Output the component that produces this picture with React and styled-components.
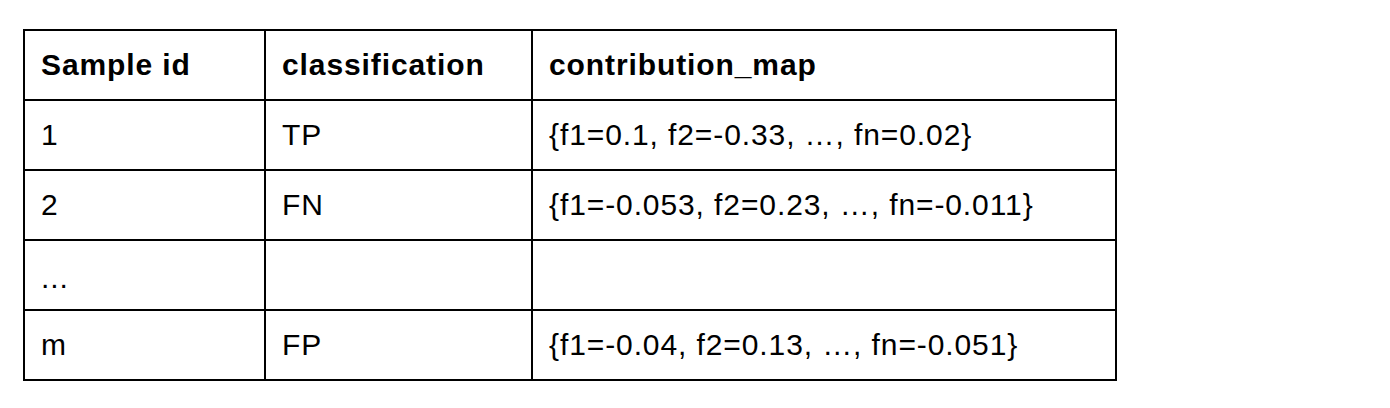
import styled, { createGlobalStyle } from "styled-components"

const GlobalStyle = createGlobalStyle`
  html, body {
    margin: 0;
    padding: 0;
    background: #fff;
  }

  body {
    font-family: "Liberation Sans", Arial, sans-serif;
    color: #000;
  }
`

const rows = [
  { id: "1", cls: "TP", map: "{f1=0.1, f2=-0.33, …, fn=0.02}" },
  { id: "2", cls: "FN", map: "{f1=-0.053, f2=0.23, …, fn=-0.011}" },
  { id: "...", cls: "", map: "", low: true },
  { id: "m", cls: "FP", map: "{f1=-0.04, f2=0.13, …, fn=-0.051}" },
]

const App = () => {
  return (
    <Page>
      <GlobalStyle />
      <Table>
        <Cell $head>Sample id</Cell>
        <Cell $head>classification</Cell>
        <Cell $head>contribution_map</Cell>
        {rows.map(r => (
          <Row key={r.id}>
            <Cell $low={r.low}>{r.id}</Cell>
            <Cell>{r.cls}</Cell>
            <Cell>{r.map}</Cell>
          </Row>
        ))}
      </Table>
    </Page>
  )
}

const Page = styled.div`
  display: flex;
  padding: 29px 0 0 23px;
  width: 100%;
  height: 408px;
  box-sizing: border-box;
`

const Table = styled.div`
  display: grid;
  grid-template-columns: 241px 267px 584px;
  grid-auto-rows: 70px;
  align-self: flex-start;
  border-left: 2px solid #000;
  border-top: 2px solid #000;
`

const Row = styled.div`
  display: contents;
`

const Cell = styled.div`
  display: flex;
  align-items: center;
  box-sizing: border-box;
  padding: ${({ $low }) => ($low ? "6px 0 0 16px" : "0 0 0 16px")};
  border-right: 2px solid #000;
  border-bottom: 2px solid #000;
  font-size: 30px;
  letter-spacing: 0.9px;
  font-weight: ${({ $head }) => ($head ? 700 : 400)};
  white-space: nowrap;
  color: #000;
`

export default App
